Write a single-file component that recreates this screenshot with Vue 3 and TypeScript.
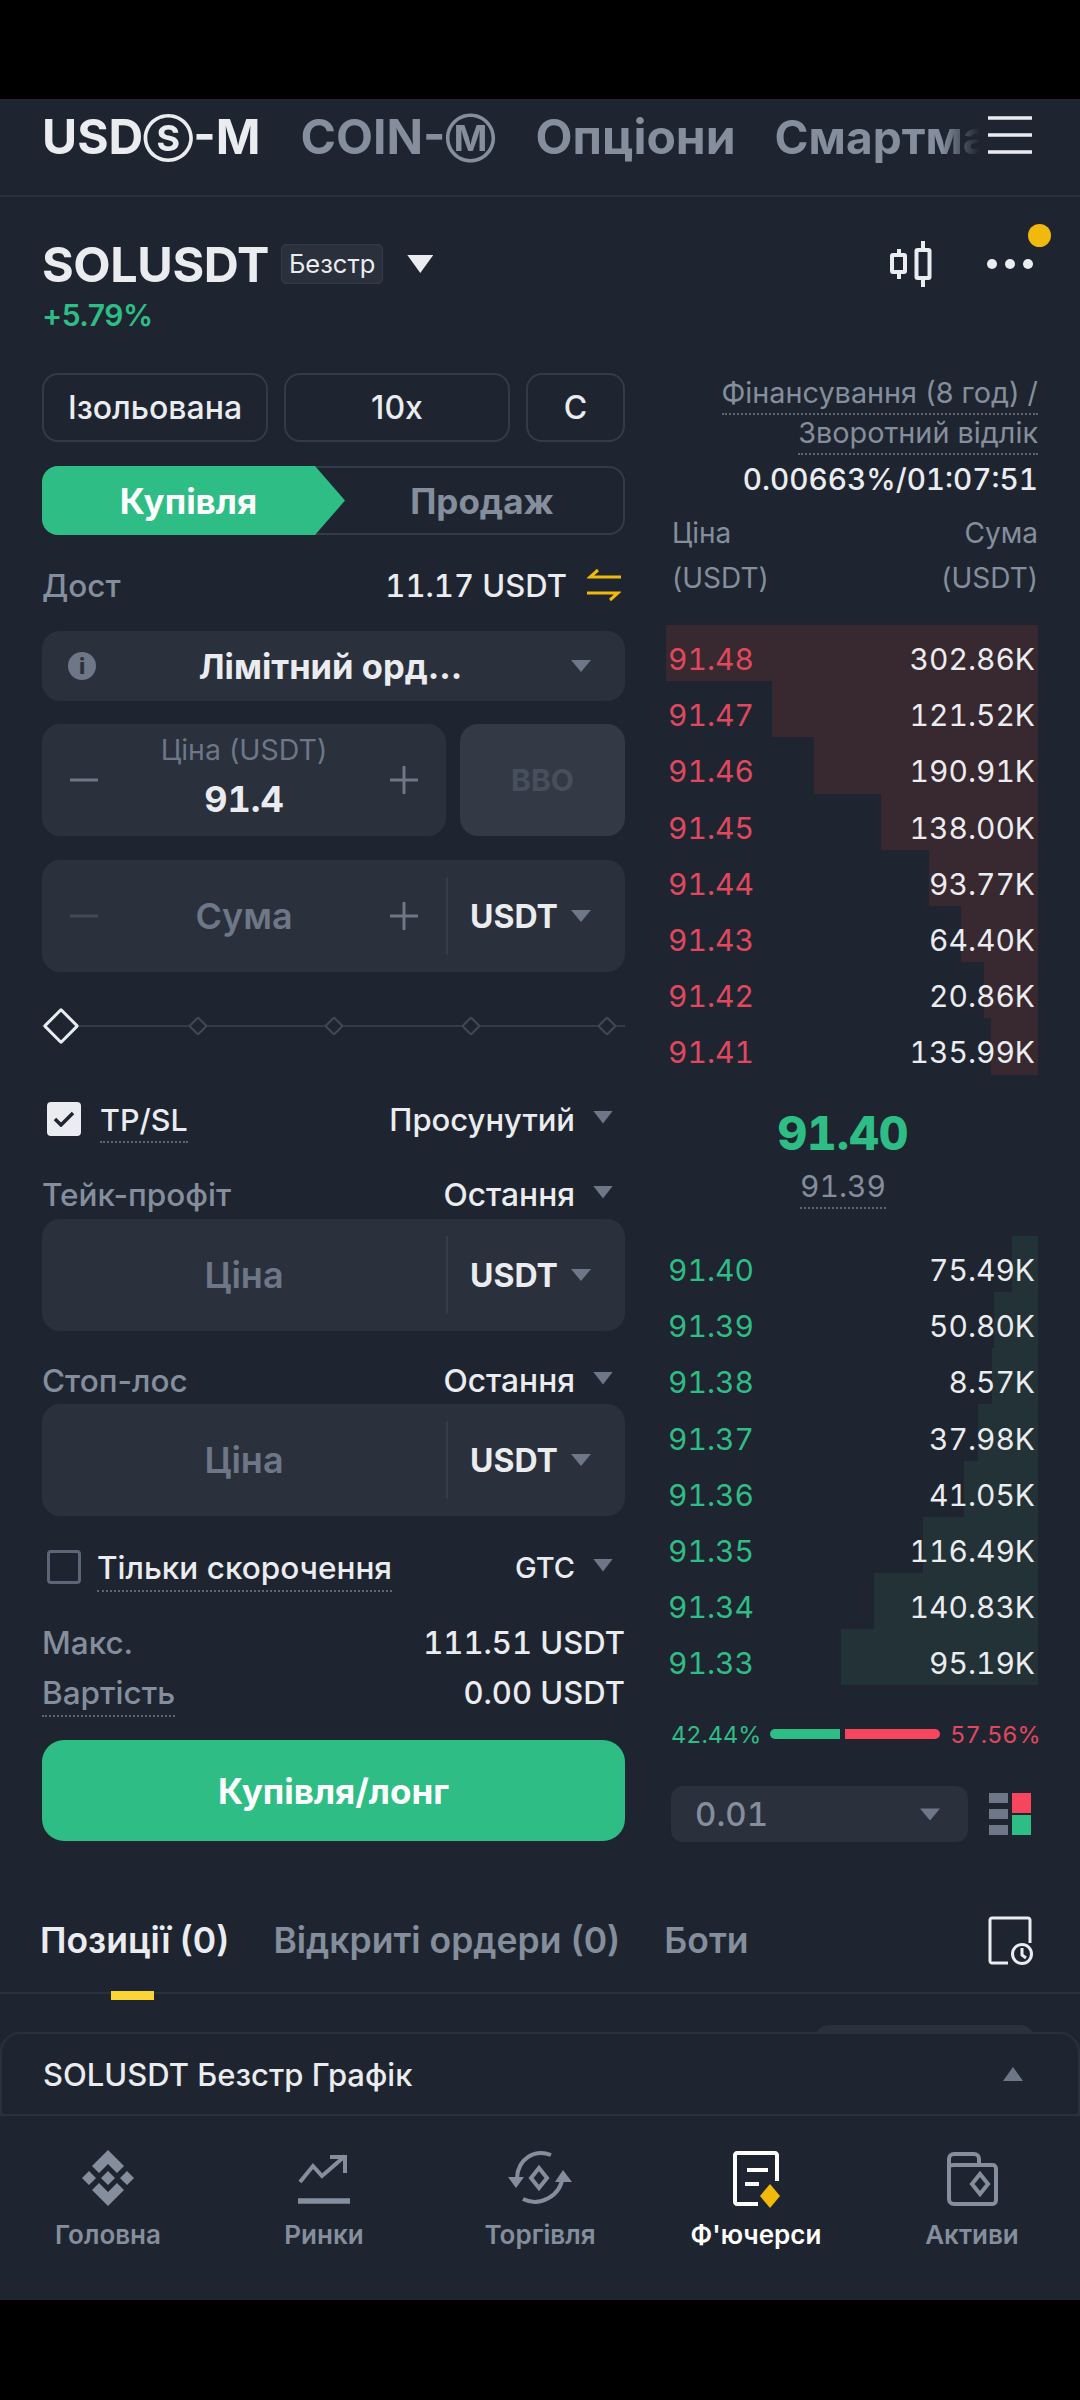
<script setup lang="ts">
interface BookRow {
  price: string
  sum: string
  depth: number
}

const asks: BookRow[] = [
  { price: '91.48', sum: '302.86K', depth: 372 },
  { price: '91.47', sum: '121.52K', depth: 266 },
  { price: '91.46', sum: '190.91K', depth: 224 },
  { price: '91.45', sum: '138.00K', depth: 157 },
  { price: '91.44', sum: '93.77K', depth: 109 },
  { price: '91.43', sum: '64.40K', depth: 77 },
  { price: '91.42', sum: '20.86K', depth: 54 },
  { price: '91.41', sum: '135.99K', depth: 47 }
]

const bids: BookRow[] = [
  { price: '91.40', sum: '75.49K', depth: 26 },
  { price: '91.39', sum: '50.80K', depth: 44 },
  { price: '91.38', sum: '8.57K', depth: 46 },
  { price: '91.37', sum: '37.98K', depth: 60 },
  { price: '91.36', sum: '41.05K', depth: 74 },
  { price: '91.35', sum: '116.49K', depth: 115 },
  { price: '91.34', sum: '140.83K', depth: 164 },
  { price: '91.33', sum: '95.19K', depth: 197 }
]
</script>

<template>
  <div class="page">
    <div class="screen">
      <header class="topBar">
        <div class="topTabs">
          <span class="topTab active">USD<span class="ring">Ⓢ</span>-M</span>
          <span class="topTab">COIN-<span class="ring">Ⓜ</span></span>
          <span class="topTab">Опціони</span>
          <span class="topTab lastTab">Смартмані</span>
        </div>
        <svg class="burger" width="44" height="40" viewBox="0 0 44 40">
          <path d="M0 3h44M0 20h44M0 37h44" stroke="#eaecef" stroke-width="3.5" />
        </svg>
      </header>

      <section class="pair">
        <div class="pairLine">
          <span class="pairName">SOLUSDT</span>
          <span class="badge">Безстр</span>
          <i class="caret pairCaret"></i>
          <div class="pairIcons">
            <svg width="46" height="46" viewBox="0 0 46 46" fill="none" stroke="#eaecef" stroke-width="4">
              <path d="M10 8v6M10 31v7M34 0v9M34 37v9" />
              <rect x="3" y="14" width="13" height="17" rx="1" />
              <rect x="27.5" y="9" width="13" height="28" rx="1" />
            </svg>
            <div class="dots"><i></i><i></i><i></i></div>
            <i class="notice"></i>
          </div>
        </div>
        <div class="change">+5.79%</div>
      </section>

      <main class="main">
        <div class="form">
          <div class="modeRow">
            <div class="modeBtn wide">Ізольована</div>
            <div class="modeBtn wide">10x</div>
            <div class="modeBtn narrow">C</div>
          </div>

          <div class="side">
            <div class="sideBuy">Купівля</div>
            <div class="sideSell">Продаж</div>
          </div>

          <div class="line avail">
            <span class="muted">Дост</span>
            <span class="availValue">
              11.17 USDT
              <svg width="34" height="34" viewBox="0 0 34 34" fill="none" stroke="#f0b90b" stroke-width="3">
                <path d="M34 9H3l8-7M0 25h31l-8 7" />
              </svg>
            </span>
          </div>

          <div class="box orderType">
            <span class="info">i</span>
            <span class="orderName">Лімітний орд...</span>
            <i class="caret"></i>
          </div>

          <div class="priceRow">
            <div class="box priceBox">
              <svg class="step" width="28" height="28" viewBox="0 0 28 28"><path d="M0 14h28" stroke="#6d7787" stroke-width="3" /></svg>
              <div class="priceText">
                <span class="priceLabel">Ціна (USDT)</span>
                <span class="priceValue">91.4</span>
              </div>
              <svg class="step" width="28" height="28" viewBox="0 0 28 28"><path d="M0 14h28M14 0v28" stroke="#6d7787" stroke-width="3" /></svg>
            </div>
            <div class="box bbo">BBO</div>
          </div>

          <div class="box field amount">
            <div class="fieldMain steps">
              <svg width="28" height="28" viewBox="0 0 28 28"><path d="M0 14h28" stroke="#414a58" stroke-width="3" /></svg>
              <span class="placeholder">Сума</span>
              <svg width="28" height="28" viewBox="0 0 28 28"><path d="M0 14h28M14 0v28" stroke="#6d7787" stroke-width="3" /></svg>
            </div>
            <div class="unit">USDT <i class="caret"></i></div>
          </div>

          <div class="slider">
            <i class="thumb"></i>
            <i class="tick"></i>
            <i class="tick"></i>
            <i class="tick"></i>
            <i class="tick"></i>
          </div>

          <div class="line tpsl">
            <span class="check on">
              <svg width="22" height="16" viewBox="0 0 22 16" fill="none"><path d="M2 8l6 6L20 2" stroke="#1f2530" stroke-width="3.5" /></svg>
            </span>
            <span class="dotted tpslText">TP/SL</span>
            <span class="pick push">Просунутий <i class="caret wideCaret"></i></span>
          </div>

          <div class="line takeLabel">
            <span class="muted">Тейк-профіт</span>
            <span class="pick">Остання <i class="caret wideCaret"></i></span>
          </div>
          <div class="box field triggerBox">
            <div class="fieldMain"><span class="placeholder">Ціна</span></div>
            <div class="unit">USDT <i class="caret"></i></div>
          </div>

          <div class="line stopLabel">
            <span class="muted">Стоп-лос</span>
            <span class="pick">Остання <i class="caret wideCaret"></i></span>
          </div>
          <div class="box field triggerBox stopBox">
            <div class="fieldMain"><span class="placeholder">Ціна</span></div>
            <div class="unit">USDT <i class="caret"></i></div>
          </div>

          <div class="line reduce">
            <span class="check"></span>
            <span class="dotted reduceText">Тільки скорочення</span>
            <span class="pick push gtc">GTC <i class="caret wideCaret"></i></span>
          </div>

          <div class="line maxRow">
            <span class="muted">Макс.</span>
            <span class="plain">111.51 USDT</span>
          </div>
          <div class="line costRow">
            <span class="muted dotted">Вартість</span>
            <span class="plain">0.00 USDT</span>
          </div>

          <div class="buyBtn">Купівля/лонг</div>
        </div>

        <aside class="book">
          <div class="funding">
            <div><span class="dotted">Фінансування (8 год) /</span></div>
            <div><span class="dotted">Зворотний відлік</span></div>
            <div class="fundingValue">0.00663%/01:07:51</div>
          </div>

          <div class="bookHead">
            <span>Ціна<br />(USDT)</span>
            <span class="right">Сума<br />(USDT)</span>
          </div>

          <div class="rows">
            <div v-for="r in asks" :key="r.price" class="row">
              <i class="bar askBar" :style="{ width: r.depth + 'px' }"></i>
              <span class="askPrice">{{ r.price }}</span>
              <span class="sum">{{ r.sum }}</span>
            </div>
          </div>

          <div class="mid">
            <div class="midPrice">91.40</div>
            <div class="midMark"><span class="dotted">91.39</span></div>
          </div>

          <div class="rows">
            <div v-for="r in bids" :key="r.price" class="row">
              <i class="bar bidBar" :style="{ width: r.depth + 'px' }"></i>
              <span class="bidPrice">{{ r.price }}</span>
              <span class="sum">{{ r.sum }}</span>
            </div>
          </div>

          <div class="ratio">
            <span class="bidPrice">42.44%</span>
            <i class="ratioBid"></i>
            <i class="ratioAsk"></i>
            <span class="askPrice">57.56%</span>
          </div>

          <div class="tickRow">
            <div class="tickSelect">0.01 <i class="caret"></i></div>
            <div class="layoutIcon">
              <i class="g1"></i><i class="red"></i>
              <i class="g2"></i>
              <i class="g3"></i><i class="green"></i>
            </div>
          </div>
        </aside>
      </main>

      <nav class="posTabs">
        <span class="posTab active">Позиції (0)<i class="posLine"></i></span>
        <span class="posTab">Відкриті ордери (0)</span>
        <span class="posTab">Боти</span>
        <svg class="history" width="46" height="50" viewBox="0 0 46 50" fill="none" stroke="#eaecef" stroke-width="3">
          <path d="M20 47H4c-1 0-2-1-2-2V4c0-1 1-2 2-2h36c1 0 2 1 2 2v23" />
          <circle cx="34" cy="38" r="9.5" />
          <path d="M34 32v7l4 3" />
        </svg>
      </nav>

      <div class="posBody">
        <i class="peek"></i>
        <div class="sheet">
          <span>SOLUSDT Безстр Графік</span>
          <i class="caret up"></i>
        </div>
      </div>

      <footer class="nav">
        <div class="navItem">
          <svg width="56" height="58" viewBox="0 0 56 58" fill="#848e9c">
            <path d="M28 0l16 16-7 7-9-9-9 9-7-7zM28 56L12 40l7-7 9 9 9-9 7 7z" />
            <path d="M28 21l7 7-7 7-7-7zM9 21l7 7-7 7-7-7zM47 21l7 7-7 7-7-7z" />
          </svg>
          <span>Головна</span>
        </div>
        <div class="navItem">
          <svg width="56" height="58" viewBox="0 0 56 58" fill="none" stroke="#848e9c" stroke-width="4">
            <path d="M4 32l13-16 9 10L49 6" />
            <path d="M34 7h15v16" />
            <path d="M2 51h52" stroke-width="5.5" />
          </svg>
          <span>Ринки</span>
        </div>
        <div class="navItem">
          <svg width="66" height="58" viewBox="0 0 66 58" fill="none" stroke="#848e9c" stroke-width="4">
            <path d="M44 5C28-1 11 8 10 28" />
            <path d="M16 49c16 8 38-2 40-24" />
            <path d="M1 27h16l-8 11zM48 32h17l-9-12z" fill="#848e9c" stroke="none" />
            <path d="M32 18l8 10-8 10-8-10z" />
          </svg>
          <span>Торгівля</span>
        </div>
        <div class="navItem active">
          <svg width="56" height="58" viewBox="0 0 56 58" fill="none">
            <path d="M49 31V5c0-1-1-2-2-2H9C8 3 7 4 7 5v47c0 1 1 2 2 2h21" stroke="#fff" stroke-width="4" />
            <path d="M19 20h21M17 34h14" stroke="#fff" stroke-width="4" />
            <path d="M42 34l10 12-10 12-10-12z" fill="#f0b90b" />
          </svg>
          <span>Ф'ючерси</span>
        </div>
        <div class="navItem">
          <svg width="56" height="58" viewBox="0 0 56 58" fill="none" stroke="#848e9c" stroke-width="4">
            <path d="M5 16V9c0-3 2-5 5-5h20c3 0 5 2 5 5v6h14c2 0 3 2 3 4v31c0 2-1 4-3 4H10c-3 0-5-2-5-5z" />
            <path d="M5 17c0-1 2-2 4-2h26" />
            <path d="M36 24l8 10-8 10-8-10z" />
          </svg>
          <span>Активи</span>
        </div>
      </footer>
    </div>
  </div>
</template>

<style>
html,
body {
  margin: 0;
  background: #000;
}
</style>

<style scoped>
.page {
  width: 1080px;
  height: 2400px;
  box-sizing: border-box;
  padding: 99px 0 100px;
  background: #000;
  font-family: Inter, 'Noto Sans', sans-serif;
  color: #eaecef;
}

.page i {
  display: block;
  font-style: normal;
}

.screen {
  height: 2201px;
  display: flex;
  flex-direction: column;
  background: #1f2530;
}

.topBar {
  height: 98px;
  flex: none;
  box-sizing: border-box;
  display: flex;
  justify-content: space-between;
  padding: 16px 48px 0 42px;
  border-bottom: 2px solid #2a303c;
}

.topTabs {
  width: 940px;
  height: 72px;
  margin-top: -12px;
  display: flex;
  gap: 40px;
  overflow: hidden;
  white-space: nowrap;
  font-size: 48px;
  line-height: 68px;
  font-weight: 700;
  color: #848e9c;
  -webkit-mask-image: linear-gradient(to right, #000 900px, transparent 938px);
  mask-image: linear-gradient(to right, #000 900px, transparent 938px);
}

.lastTab {
  font-size: 46px;
  margin-left: -1px;
}

.ring {
  font-size: 36px;
  font-weight: 700;
  vertical-align: 3px;
}

.topTab.active {
  color: #eaecef;
}

.burger {
  flex: none;
}

.pair {
  height: 176px;
  flex: none;
  box-sizing: border-box;
  padding: 40px 29px 0 42px;
}

.pairLine {
  height: 54px;
  display: flex;
  align-items: center;
}

.pairName {
  font-size: 48.5px;
  font-weight: 700;
  letter-spacing: -0.4px;
}

.badge {
  margin-left: 12px;
  padding: 0 7px;
  height: 38px;
  line-height: 38px;
  background: #2a303c;
  border: 1px solid #353c49;
  border-radius: 5px;
  font-size: 25.5px;
}

.pairIcons {
  position: relative;
  margin-left: auto;
  display: flex;
  align-items: center;
  gap: 52px;
  padding-right: 18px;
}

.dots {
  display: flex;
  gap: 8px;
}

.dots i {
  width: 10px;
  height: 10px;
  border-radius: 50%;
  background: #eaecef;
}

.notice {
  position: absolute;
  right: 0;
  top: -17px;
  width: 23px;
  height: 23px;
  border-radius: 50%;
  background: #f0b90b;
}

.change {
  margin-top: 6px;
  font-size: 30px;
  font-weight: 600;
  color: #2ebd85;
  letter-spacing: -0.5px;
}

.main {
  flex: none;
  height: 1468px;
  display: grid;
  grid-template-columns: 583px 372px;
  column-gap: 41px;
  padding: 0 42px;
}

.caret {
  width: 20px;
  height: 12px;
  flex: none;
  background: #6d7787;
  clip-path: polygon(0 0, 100% 0, 50% 100%);
}

.pairCaret {
  margin-left: 24px;
  width: 26px;
  height: 18px;
  background: #eaecef;
}

.wideCaret {
  width: 20px;
  height: 13px;
  margin-left: 18px;
  margin-top: -4px;
}

.modeRow {
  display: flex;
  gap: 16px;
}

.modeBtn {
  height: 69px;
  box-sizing: border-box;
  border: 2px solid #343b48;
  border-radius: 16px;
  display: flex;
  align-items: center;
  justify-content: center;
  font-size: 32px;
  font-weight: 500;
}

.wide {
  width: 226px;
}

.narrow {
  width: 99px;
}

.side {
  margin-top: 24px;
  height: 69px;
  box-sizing: border-box;
  border: 2px solid #343b48;
  border-radius: 16px;
  display: flex;
  position: relative;
  font-size: 35px;
  font-weight: 700;
}

.sideBuy {
  width: 303px;
  margin: -2px 0 -2px -2px;
  border-radius: 16px 0 0 16px;
  background: #2ebd85;
  clip-path: polygon(0 0, 273px 0, 100% 50%, 273px 100%, 0 100%);
  display: flex;
  align-items: center;
  justify-content: center;
  padding-right: 10px;
  box-sizing: border-box;
  color: #fff;
}

.sideSell {
  flex: 1;
  display: flex;
  align-items: center;
  justify-content: center;
  padding-right: 4px;
  color: #848e9c;
}

.line {
  height: 40px;
  display: flex;
  align-items: center;
  justify-content: space-between;
  font-size: 31.5px;
  font-weight: 500;
}

.muted {
  color: #848e9c;
}

.avail {
  margin-top: 30px;
  height: 40px;
}

.availValue {
  display: flex;
  align-items: center;
  gap: 20px;
  padding-right: 4px;
  font-size: 31px;
  font-variant-numeric: tabular-nums;
}

.box {
  background: #2a303c;
  border-radius: 18px;
}

.orderType {
  margin-top: 26px;
  height: 70px;
  display: flex;
  align-items: center;
  padding: 0 34px 0 26px;
  justify-content: space-between;
}

.info {
  width: 28px;
  height: 28px;
  border-radius: 50%;
  background: #6d7787;
  color: #2a303c;
  font-size: 22px;
  font-weight: 800;
  line-height: 28px;
  text-align: center;
}

.orderName {
  font-size: 34.5px;
  font-weight: 700;
  margin-left: -6px;
}

.priceRow {
  margin-top: 23px;
  display: flex;
  justify-content: space-between;
}

.priceBox {
  width: 404px;
  height: 112px;
  box-sizing: border-box;
  display: flex;
  align-items: center;
  justify-content: space-between;
  padding: 0 28px;
}

.priceText {
  display: flex;
  flex-direction: column;
  align-items: center;
  gap: 13px;
  padding-bottom: 8px;
}

.priceLabel {
  font-size: 28.5px;
  line-height: 32px;
  color: #6d7787;
}

.priceValue {
  font-size: 36px;
  line-height: 40px;
  font-weight: 700;
  font-variant-numeric: tabular-nums;
}

.bbo {
  width: 165px;
  height: 112px;
  display: flex;
  align-items: center;
  justify-content: center;
  background: #333a46;
  color: #474f5d;
  font-size: 30px;
  font-weight: 700;
}

.field {
  height: 112px;
  display: flex;
  align-items: center;
}

.amount {
  margin-top: 24px;
}

.fieldMain {
  width: 404px;
  box-sizing: border-box;
  display: flex;
  align-items: center;
  justify-content: center;
}

.steps {
  justify-content: space-between;
  padding: 0 28px;
}

.placeholder {
  font-size: 36px;
  font-weight: 600;
  color: #6d7787;
}

.unit {
  flex: 1;
  height: 78px;
  box-sizing: border-box;
  border-left: 2px solid #353c49;
  padding: 0 34px 0 22px;
  display: flex;
  align-items: center;
  justify-content: space-between;
  font-size: 32px;
  font-weight: 700;
}

.slider {
  margin-top: 34px;
  height: 40px;
  display: flex;
  align-items: center;
  justify-content: space-between;
  padding: 0 11px 0 12px;
  background: linear-gradient(#353c49, #353c49) no-repeat center / 100% 2px;
}

.thumb {
  width: 26px;
  height: 26px;
  margin: 0 -6px;
  box-sizing: border-box;
  background: #1f2530;
  border: 3px solid #eaecef;
  border-radius: 2px;
  transform: rotate(45deg);
}

.tick {
  width: 14px;
  height: 14px;
  box-sizing: border-box;
  background: #1f2530;
  border: 2px solid #414958;
  border-radius: 2px;
  transform: rotate(45deg);
}

.check {
  width: 34px;
  height: 34px;
  box-sizing: border-box;
  margin-left: 5px;
  flex: none;
  border: 3px solid #5c6677;
  border-radius: 4px;
  display: flex;
  align-items: center;
  justify-content: center;
}

.check.on {
  background: #eaecef;
  border: none;
}

.tpsl {
  margin-top: 53px;
}

.tpslText {
  margin-left: 19px;
  font-size: 30.5px;
}

.reduceText {
  margin-left: 16px;
}

.dotted {
  border-bottom: 2px dotted #5e6673;
  padding-bottom: 3px;
}

.line .dotted {
  margin-top: 5px;
}

.push {
  margin-left: auto;
}

.pick {
  display: flex;
  align-items: center;
  padding-right: 12px;
  font-size: 31px;
}

.takeLabel .pick,
.stopLabel .pick {
  font-size: 31.7px;
}

.gtc {
  font-size: 29px;
}

.plain {
  font-size: 31px;
  font-variant-numeric: tabular-nums;
}

.takeLabel {
  margin-top: 35px;
}

.triggerBox {
  margin-top: 5px;
}

.stopLabel {
  margin-top: 29px;
}

.stopBox {
  margin-top: 4px;
}

.reduce {
  margin-top: 31px;
}

.maxRow {
  margin-top: 35px;
}

.costRow {
  margin-top: 10px;
}

.buyBtn {
  margin-top: 28px;
  height: 101px;
  border-radius: 22px;
  background: #2ebd85;
  color: #fff;
  display: flex;
  align-items: center;
  justify-content: center;
  font-size: 35px;
  font-weight: 700;
}

.funding {
  text-align: right;
  font-size: 28.8px;
  line-height: 40px;
  color: #848e9c;
}

.fundingValue {
  margin-top: 6px;
  color: #eaecef;
  font-size: 29.7px;
  font-weight: 500;
  font-variant-numeric: tabular-nums;
}

.bookHead {
  margin-top: 12px;
  padding: 0 0 0 6px;
  display: flex;
  justify-content: space-between;
  font-size: 28px;
  line-height: 45px;
  color: #848e9c;
}

.right {
  text-align: right;
}

.rows {
  margin-top: 24px;
}

.mid + .rows {
  margin-top: 0;
}

.row {
  position: relative;
  height: 56.2px;
  box-sizing: border-box;
  padding: 12px 3px 0 2px;
  display: flex;
  align-items: center;
  justify-content: space-between;
  font-size: 30px;
  font-variant-numeric: tabular-nums;
}

.row span {
  position: relative;
}

.bar {
  position: absolute;
  right: 0;
  top: 0;
  bottom: 0;
}

.askBar {
  background: #38282f;
}

.bidBar {
  background: #233236;
}

.askPrice {
  color: #e0485e;
}

.bidPrice {
  color: #2ebd85;
}

.mid {
  height: 161.4px;
  box-sizing: border-box;
  padding: 30px 18px 0 0;
  text-align: center;
  font-variant-numeric: tabular-nums;
}

.midPrice {
  font-size: 46px;
  line-height: 56px;
  font-weight: 800;
  color: #2ebd85;
}

.midMark {
  margin-top: 5px;
  font-size: 30px;
  line-height: 40px;
  color: #848e9c;
}

.ratio {
  margin-top: 34px;
  height: 30px;
  padding-left: 5px;
  display: flex;
  align-items: center;
  font-size: 23.5px;
  white-space: nowrap;
  font-variant-numeric: tabular-nums;
}

.ratio > * {
  flex: none;
}

.ratioBid {
  width: 70px;
  height: 10px;
  margin: 0 5px 0 9px;
  border-radius: 5px 0 0 5px;
  background: #2ebd85;
}

.ratioAsk {
  width: 95px;
  height: 10px;
  margin-right: 10px;
  border-radius: 0 5px 5px 0;
  background: #f6465d;
}

.tickRow {
  margin-top: 37px;
  padding-left: 5px;
  display: flex;
  align-items: center;
  justify-content: space-between;
}

.tickSelect {
  width: 297px;
  height: 56px;
  box-sizing: border-box;
  padding: 0 28px 0 24px;
  background: #2a303c;
  border-radius: 12px;
  display: flex;
  align-items: center;
  justify-content: space-between;
  color: #848e9c;
  font-size: 33px;
  font-weight: 500;
  font-variant-numeric: tabular-nums;
}

.layoutIcon {
  width: 42px;
  height: 42px;
  margin-right: 7px;
  display: grid;
  grid-template-columns: 19px 19px;
  grid-template-rows: 10px 10px 10px;
  gap: 6px 4px;
}

.g1,
.g2,
.g3 {
  background: #6d7787;
}

.red {
  grid-row: 1 / 3;
  grid-column: 2;
  height: 20px;
  background: #f6465d;
}

.green {
  grid-row: 2 / 4;
  grid-column: 2;
  height: 20px;
  align-self: end;
  background: #2ebd85;
}

.g1 {
  grid-row: 1;
  grid-column: 1;
}

.g2 {
  grid-row: 2;
  grid-column: 1;
}

.g3 {
  grid-row: 3;
  grid-column: 1;
}

.posTabs {
  position: relative;
  flex: none;
  height: 153px;
  box-sizing: border-box;
  display: flex;
  align-items: center;
  gap: 44px;
  padding: 48px 42px 0 40px;
  border-bottom: 2px solid #2a303c;
  font-size: 35.5px;
  font-weight: 600;
  color: #848e9c;
}

.posTab {
  position: relative;
  white-space: nowrap;
}

.posTab.active {
  color: #eaecef;
}

.posLine {
  position: absolute;
  left: 71px;
  bottom: -38px;
  width: 43px;
  height: 9px;
  background: #fcd535;
}

.history {
  margin-left: auto;
  margin-right: 4px;
}

.posBody {
  position: relative;
  flex: none;
  height: 122px;
  box-sizing: border-box;
  padding-top: 38px;
}

.peek {
  position: absolute;
  left: 815px;
  top: 31px;
  width: 219px;
  height: 20px;
  background: #2a303c;
  border-radius: 14px 14px 0 0;
}

.sheet {
  position: relative;
  height: 84px;
  box-sizing: border-box;
  padding: 0 55px 0 41px;
  display: flex;
  align-items: center;
  justify-content: space-between;
  background: #1f2530;
  border: 2px solid #2a303c;
  border-radius: 20px 20px 0 0;
  font-size: 31px;
  font-weight: 500;
}

.up {
  clip-path: polygon(50% 0, 100% 100%, 0 100%);
  height: 14px;
}

.nav {
  flex: 1;
  display: grid;
  grid-template-columns: repeat(5, 1fr);
  padding: 34px 0 0;
}

.navItem {
  display: flex;
  flex-direction: column;
  align-items: center;
  color: #848e9c;
  font-size: 26px;
  font-weight: 600;
}

.navItem span {
  margin-top: 9px;
  line-height: 36px;
}

.navItem.active {
  color: #fff;
}
</style>
